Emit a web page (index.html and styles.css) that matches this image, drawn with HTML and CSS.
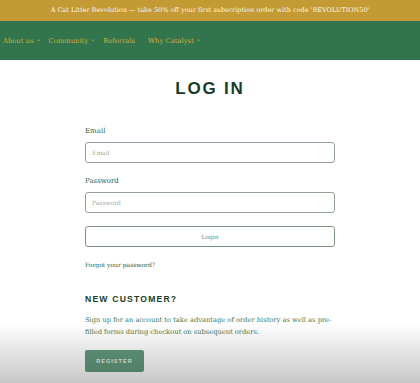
FILE: index.html
```html
<!DOCTYPE html>
<html>
<head>
<meta charset="utf-8">
<link rel="stylesheet" href="styles.css">
</head>
<body>
<div class="promo">A Cat Litter Revolution — take 50% off your first subscription order with code 'REVOLUTION50'</div>
<nav class="nav">
  <a class="nav-item">About us<span class="chev">⌄</span></a>
  <a class="nav-item">Community<span class="chev">⌄</span></a>
  <a class="nav-item nav-plain">Referrals</a>
  <a class="nav-item">Why Catalyst<span class="chev">⌄</span></a>
</nav>
<main class="main">
  <h1 class="title">LOG IN</h1>
  <form class="form">
    <label class="label">Email</label>
    <div class="input">Email</div>
    <label class="label label-pw">Password</label>
    <div class="input">Password</div>
    <div class="btn-login">Login</div>
    <a class="forgot">Forgot your password?</a>
  </form>
  <h2 class="subtitle">NEW CUSTOMER?</h2>
  <p class="text">Sign up for an account to take advantage of order history as well as pre-filled forms during checkout on subsequent orders.</p>
  <div class="btn-register">REGISTER</div>
</main>
<div class="fade"></div>
</body>
</html>
```
FILE: styles.css
```css
html, body { margin: 0; padding: 0; }
body {
  width: 420px;
  height: 383px;
  overflow: hidden;
  position: relative;
  background: #fff;
  font-family: "DejaVu Serif", "Liberation Serif", serif;
}
.promo {
  height: 21px;
  background: #c49a34;
  color: #fff7e6;
  font-size: 6.5px;
  line-height: 21px;
  text-align: center;
}
.nav {
  height: 39px;
  background: #32754c;
  display: flex;
  align-items: center;
  padding-left: 3px;
}
.nav-item {
  color: #cdb043;
  font-size: 6.8px;
  display: flex;
  align-items: center;
  margin-right: 8px;
}
.nav-plain { margin-right: 13px; }
.chev {
  font-size: 6px;
  margin-left: 2px;
  margin-top: -4px;
}
.main {
  padding: 0 85px;
}
.title {
  margin: 19px 0 0;
  text-align: center;
  font-family: "Liberation Sans", sans-serif;
  font-weight: bold;
  font-size: 17px;
  letter-spacing: 1.8px;
  color: #173d1f;
  line-height: 20px;
}
.form { display: flex; flex-direction: column; margin-top: 27px; }
.label {
  font-size: 7px;
  color: #2f5e3e;
  line-height: 10px;
  margin-bottom: 6px;
}
.label-pw { margin-top: 13px; }
.input {
  height: 19px;
  border: 1px solid #93a393;
  border-radius: 3px;
  font-size: 6px;
  color: #9aab9c;
  line-height: 19px;
  padding-left: 6px;
}
.btn-login {
  margin-top: 13px;
  height: 19px;
  border: 1px solid #7f9480;
  border-radius: 3px;
  font-size: 6px;
  color: #6f8a78;
  line-height: 19px;
  text-align: center;
}
.forgot {
  margin-top: 13px;
  font-size: 6px;
  color: #2f5e3e;
  line-height: 10px;
}
.subtitle {
  margin: 22px 0 0;
  font-family: "Liberation Sans", sans-serif;
  font-weight: bold;
  font-size: 8.6px;
  letter-spacing: 1.2px;
  color: #173d1f;
  line-height: 14px;
}
.text {
  margin: 8px 0 0;
  font-size: 6.7px;
  line-height: 12px;
  color: #3e7a55;
}
.btn-register {
  margin-top: 12px;
  width: 59px;
  height: 22px;
  background: #639a7e;
  border-radius: 2px;
  color: #e6efe8;
  font-family: "Liberation Sans", sans-serif;
  font-weight: bold;
  font-size: 5.6px;
  letter-spacing: 1px;
  line-height: 22px;
  text-align: center;
}
.fade {
  position: absolute;
  left: 0; right: 0; bottom: 0;
  height: 60px;
  background: linear-gradient(to bottom, rgba(0,0,0,0), rgba(0,0,0,0.22));
  pointer-events: none;
}
```
